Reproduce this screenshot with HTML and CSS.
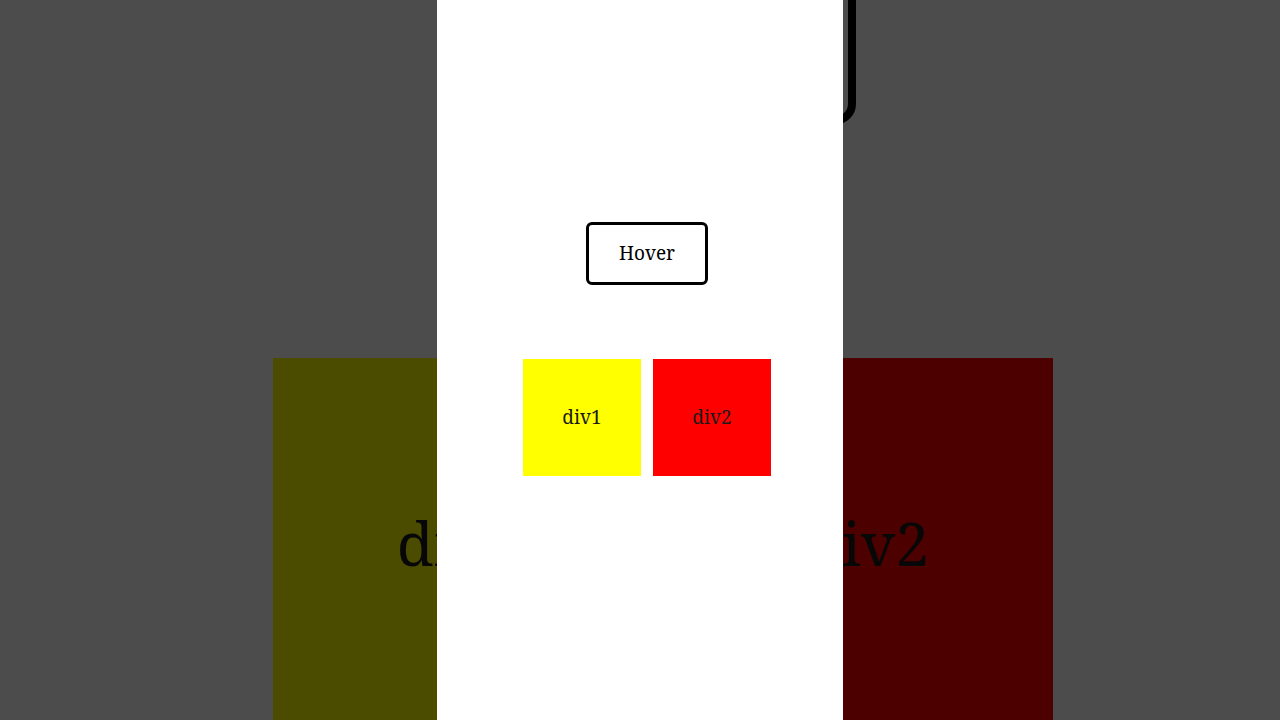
FILE: index.html
```
<!DOCTYPE html>
<html lang="en">
<head>
    <meta charset="UTF-8">
    <meta name="viewport" content="width=device-width, initial-scale=1.0">
    <title>Hover</title>
    <link rel="stylesheet" href="styles.css">
</head>
<body>
    <!-- enlarged, dimmed copy behind the panel -->
    <div class="demo backdrop" aria-hidden="true">
        <div class="hover-btn"></div>
        <div class="boxes">
            <div class="box div1">div1</div>
            <div class="box div2">div2</div>
        </div>
    </div>
    <div class="shade"></div>

    <main class="demo panel">
        <button class="hover-btn" type="button">Hover</button>
        <div class="boxes">
            <div class="box div1">div1</div>
            <div class="box div2">div2</div>
        </div>
    </main>
</body>
</html>
```
FILE: styles.css
```
* {
    box-sizing: border-box;
}

body {
    margin: 0;
    min-height: 100vh;
    display: flex;
    justify-content: center;
    overflow: hidden;
    font-family: "Noto Serif", "Droid Serif", "DejaVu Serif", serif;
    background-color: white;
}

.demo {
    display: flex;
    flex-direction: column;
    align-items: center;
    background-color: white;
}

.hover-btn {
    flex: none;
    padding: 0 0 2px;
    font: inherit;
    color: black;
    background-color: white;
    border: solid black;
}

button.hover-btn {
    cursor: pointer;
}

.boxes {
    display: flex;
}

.box {
    flex: none;
    display: flex;
    align-items: center;
    justify-content: center;
    padding-bottom: 2px;
    color: #1a1a1a;
}

.div1 {
    background-color: yellow;
}

.div2 {
    background-color: red;
}

/* Front panel */
.panel {
    position: relative;
    height: 100vh;
    aspect-ratio: 203 / 360;
    padding: 222px 0 0 14px;
    gap: 74px;
    font-size: 19px;
}

.panel .hover-btn {
    width: 122px;
    height: 63px;
    border-width: 3px;
    border-radius: 6px;
}

.panel .boxes {
    gap: 12px;
}

.panel .box {
    width: 118px;
    height: 117px;
}

/* Backdrop */
.backdrop {
    position: fixed;
    inset: -74px 0 0 0;
    padding-left: 46px;
    gap: 234px;
    font-size: 60px;
}

.backdrop .hover-btn {
    width: 386px;
    height: 198px;
    border-width: 8px;
    border-radius: 20px;
}

.backdrop .boxes {
    gap: 36px;
}

.backdrop .box {
    width: 372px;
    height: 372px;
}

.shade {
    position: fixed;
    inset: 0;
    background-color: rgba(0, 0, 0, 0.7);
}
```
